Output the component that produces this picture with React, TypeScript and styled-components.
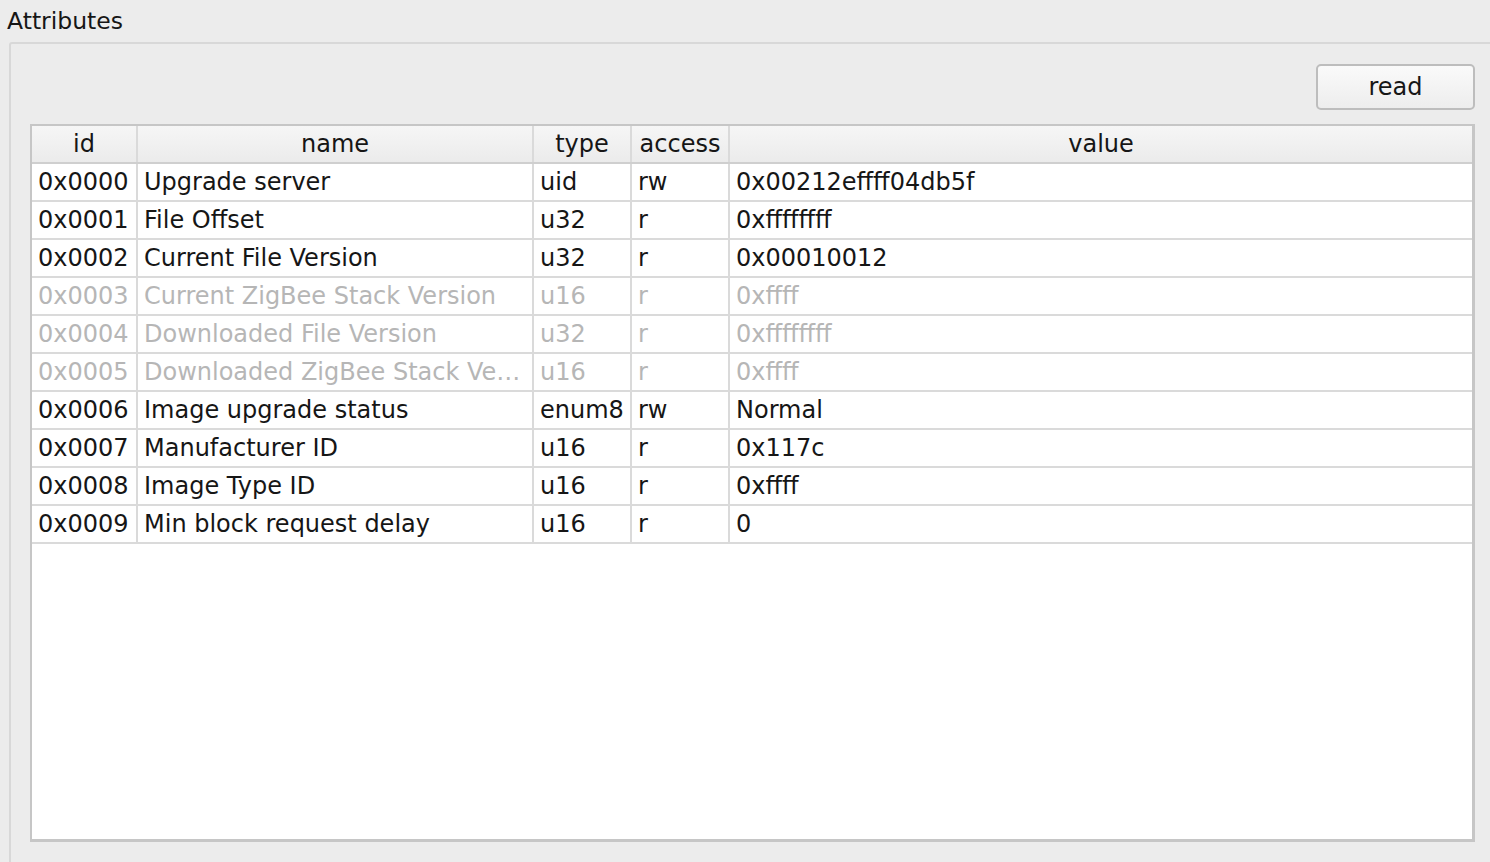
import styled, { createGlobalStyle } from 'styled-components';

const GlobalStyle = createGlobalStyle`
  html, body {
    margin: 0;
    padding: 0;
    background: #ececec;
    overflow: hidden;
  }
  body {
    font-family: 'DejaVu Sans', 'Liberation Sans', sans-serif;
    font-size: 24px;
    color: #161616;
  }
`;

type Attr = {
  id: string;
  name: string;
  type: string;
  access: string;
  value: string;
  disabled?: boolean;
};

const rows: Attr[] = [
  { id: '0x0000', name: 'Upgrade server', type: 'uid', access: 'rw', value: '0x00212effff04db5f' },
  { id: '0x0001', name: 'File Offset', type: 'u32', access: 'r', value: '0xffffffff' },
  { id: '0x0002', name: 'Current File Version', type: 'u32', access: 'r', value: '0x00010012' },
  { id: '0x0003', name: 'Current ZigBee Stack Version', type: 'u16', access: 'r', value: '0xffff', disabled: true },
  { id: '0x0004', name: 'Downloaded File Version', type: 'u32', access: 'r', value: '0xffffffff', disabled: true },
  { id: '0x0005', name: 'Downloaded ZigBee Stack Ve…', type: 'u16', access: 'r', value: '0xffff', disabled: true },
  { id: '0x0006', name: 'Image upgrade status', type: 'enum8', access: 'rw', value: 'Normal' },
  { id: '0x0007', name: 'Manufacturer ID', type: 'u16', access: 'r', value: '0x117c' },
  { id: '0x0008', name: 'Image Type ID', type: 'u16', access: 'r', value: '0xffff' },
  { id: '0x0009', name: 'Min block request delay', type: 'u16', access: 'r', value: '0' },
];

const columns = '106px 396px 98px 98px 1fr';

const Page = styled.div`
  width: 1490px;
  height: 862px;
  overflow: hidden;
  box-sizing: border-box;
  padding: 4px 0 0 7px;
`;

const Title = styled.div`
  height: 34px;
  line-height: 34px;
  margin-bottom: 4px;
  font-size: 23.5px;
`;

const Frame = styled.div`
  width: 1490px;
  height: 840px;
  margin-left: 2px;
  box-sizing: border-box;
  border: 2px solid #d8d8d8;
  border-radius: 3px;
  padding: 20px 22px 0 19px;
  display: flex;
  flex-direction: column;
`;

const Toolbar = styled.div`
  display: flex;
  justify-content: flex-end;
  margin-bottom: 14px;
`;

const Button = styled.button`
  width: 159px;
  height: 46px;
  border: 2px solid #bdbdbd;
  border-radius: 5px;
  background: linear-gradient(#fafafa, #ededed);
  font-family: inherit;
  font-size: inherit;
  color: #161616;
  padding: 0;
`;

const Table = styled.div`
  height: 718px;
  box-sizing: border-box;
  background: #ffffff;
  border: 2px solid #c6c6c6;
  border-right-width: 3px;
  border-bottom-width: 3px;
`;

const Row = styled.div<{ $header?: boolean; $disabled?: boolean }>`
  display: grid;
  grid-template-columns: ${columns};
  height: 38px;
  box-sizing: border-box;
  border-bottom: 2px solid ${p => (p.$header ? '#cfcfcf' : '#dadada')};
  background: ${p => (p.$header ? 'linear-gradient(#f6f6f6, #ebebeb)' : '#ffffff')};
  color: ${p => (p.$disabled ? '#b6b6b6' : '#161616')};
`;

const Cell = styled.div<{ $header?: boolean }>`
  box-sizing: border-box;
  border-right: 2px solid #dadada;
  padding: 0 ${p => (p.$header ? '5px' : '5px 0 6px')};
  line-height: 36px;
  white-space: nowrap;
  overflow: hidden;
  text-align: ${p => (p.$header ? 'center' : 'left')};

  &:last-child {
    border-right: none;
  }
`;

const App = () => {
  return (
    <>
      <GlobalStyle />
      <Page>
        <Title>Attributes</Title>
        <Frame>
          <Toolbar>
            <Button>read</Button>
          </Toolbar>
          <Table>
            <Row $header>
              {['id', 'name', 'type', 'access', 'value'].map(h => (
                <Cell key={h} $header>
                  {h}
                </Cell>
              ))}
            </Row>
            {rows.map(r => (
              <Row key={r.id} $disabled={r.disabled}>
                <Cell>{r.id}</Cell>
                <Cell>{r.name}</Cell>
                <Cell>{r.type}</Cell>
                <Cell>{r.access}</Cell>
                <Cell>{r.value}</Cell>
              </Row>
            ))}
          </Table>
        </Frame>
      </Page>
    </>
  );
};

export default App;
